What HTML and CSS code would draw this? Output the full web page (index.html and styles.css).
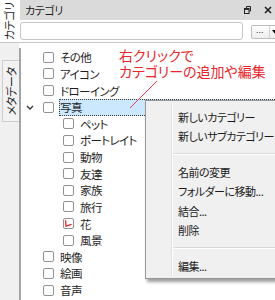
FILE: index.html
```html
<!DOCTYPE html>
<html lang="ja">
<head>
<meta charset="utf-8">
<title>カテゴリ</title>
<link rel="stylesheet" href="styles.css">
</head>
<body>
<div class="app">
  <div class="tabs">
    <div class="tab tab-active"><span class="tab-label">カテゴリ</span></div>
    <div class="tab tab-meta"><span class="tab-label">メタデータ</span></div>
  </div>
  <div class="panel">
    <div class="header">
      <span class="title">カテゴリ</span>
      <span class="hdr-icons">
        <svg width="7" height="8" viewBox="0 0 7 8"><path d="M2.5 2V0.5h4v4.5H5" fill="none" stroke="#222"/><rect x="0.5" y="2.5" width="4.5" height="5" fill="none" stroke="#222"/><path d="M0.5 3.2h4.5" stroke="#222" stroke-width="1.4"/></svg>
        <svg width="8" height="8" viewBox="0 0 8 8"><path d="M1 1L7 7M7 1L1 7" stroke="#222" stroke-width="1.6"/></svg>
      </span>
    </div>
    <div class="search-row">
      <div class="search"></div>
      <div class="opt-btn"><span class="dots">...</span><span class="caret-sep"></span><svg class="caret" width="5" height="4" viewBox="0 0 5 4"><path d="M0 0h5L2.5 3.5z" fill="#111"/></svg></div>
    </div>
    <div class="tree">
      <div class="row"><span class="toggle"></span><span class="cb"></span><span class="label">その他</span></div>
      <div class="row"><span class="toggle"></span><span class="cb"></span><span class="label">アイコン</span></div>
      <div class="row"><span class="toggle"></span><span class="cb"></span><span class="label">ドローイング</span></div>
      <div class="row sel"><span class="toggle"><svg width="8" height="5" viewBox="0 0 8 5"><path d="M1 1l3 3 3-3" fill="none" stroke="#333" stroke-width="1.4"/></svg></span><span class="cb"></span><span class="label">写真</span></div>
      <div class="row l1"><span class="toggle"></span><span class="cb"></span><span class="label">ペット</span></div>
      <div class="row l1"><span class="toggle"></span><span class="cb"></span><span class="label">ポートレイト</span></div>
      <div class="row l1"><span class="toggle"></span><span class="cb"></span><span class="label">動物</span></div>
      <div class="row l1"><span class="toggle"></span><span class="cb"></span><span class="label">友達</span></div>
      <div class="row l1"><span class="toggle"></span><span class="cb"></span><span class="label">家族</span></div>
      <div class="row l1"><span class="toggle"></span><span class="cb"></span><span class="label">旅行</span></div>
      <div class="row l1"><span class="toggle"></span><span class="cb"><svg width="11" height="11" viewBox="0 0 11 11"><path d="M2.6 2.2L2.9 8.2L8.6 6.3" fill="none" stroke="#e02a2a" stroke-width="1.3"/></svg></span><span class="label">花</span></div>
      <div class="row l1"><span class="toggle"></span><span class="cb"></span><span class="label">風景</span></div>
      <div class="row"><span class="toggle"></span><span class="cb"></span><span class="label">映像</span></div>
      <div class="row"><span class="toggle"></span><span class="cb"></span><span class="label">絵画</span></div>
      <div class="row"><span class="toggle"></span><span class="cb"></span><span class="label">音声</span></div>
    </div>
  </div>
</div>

<div class="note">右クリックで<br>カテゴリーの追加や編集</div>
<svg class="pointer" width="275" height="300" viewBox="0 0 275 300"><line x1="157" y1="81" x2="130" y2="108" stroke="#e8404a" stroke-width="1"/></svg>

<div class="menu">
  <div class="mi">新しいカテゴリー</div>
  <div class="mi">新しいサブカテゴリー</div>
  <div class="msep"></div>
  <div class="mi">名前の変更</div>
  <div class="mi">フォルダーに移動...</div>
  <div class="mi">結合...</div>
  <div class="mi">削除</div>
  <div class="msep"></div>
  <div class="mi">編集...</div>
</div>
</body>
</html>
```
FILE: styles.css
```css
html, body {
  margin: 0;
  padding: 0;
}
body {
  width: 275px;
  height: 300px;
  overflow: hidden;
  position: relative;
  background: #fff;
  color: #1e1e1e;
  font-family: "Noto Sans CJK JP", "Noto Sans", sans-serif;
  font-feature-settings: "palt";
}

.app {
  display: flex;
  height: 300px;
}

/* left vertical tab strip */
.tabs {
  width: 19px;
  flex-shrink: 0;
  background: #f0f0f0;
  display: flex;
  flex-direction: column;
}
.tab {
  display: flex;
  align-items: center;
  justify-content: center;
  box-sizing: border-box;
}
.tab-active {
  height: 43px;
  background: #fff;
  border-bottom: 1px solid #c8c8c8;
}
.tab-meta {
  margin: 17px 0 0 2px;
  height: 62px;
  border: 1px solid #cdcdcd;
  border-right: none;
  background: #f2f2f2;
}
.tab-label {
  writing-mode: vertical-rl;
  text-orientation: sideways;
  transform: rotate(180deg);
  font-size: 11px;
  line-height: 1;
  letter-spacing: -0.3px;
  color: #222;
}

/* panel */
.panel {
  flex: 1;
  min-width: 0;
  display: flex;
  flex-direction: column;
}
.header {
  height: 20px;
  margin-left: 1px;
  background: #dadada;
  display: flex;
  align-items: center;
  padding: 0 3px 0 5px;
  font-size: 11px;
  letter-spacing: -0.4px;
  color: #222;
}
.title {
  flex: 1;
}
.hdr-icons {
  display: flex;
  align-items: center;
  gap: 13px;
}

.search-row {
  height: 22px;
  display: flex;
  align-items: center;
  gap: 8px;
  padding-left: 1px;
  overflow: hidden;
  border-bottom: 1px solid #c6c6c6;
  margin-bottom: 5px;
}
.search {
  flex-shrink: 0;
  width: 223px;
  height: 18px;
  box-sizing: border-box;
  border: 1px solid #c5c5c5;
  border-radius: 3px;
  background: #fff;
}
.opt-btn {
  flex-shrink: 0;
  width: 30px;
  height: 14px;
  margin-top: 2px;
  box-sizing: border-box;
  border: 1px solid #bdbdbd;
  border-radius: 2px;
  background: linear-gradient(#ffffff, #eeeeee);
  display: flex;
  align-items: center;
  font-family: "Liberation Sans", sans-serif;
  font-size: 9px;
  color: #222;
}
.dots {
  margin-left: 4px;
  line-height: 1;
  margin-top: -3px;
}
.caret-sep {
  width: 1px;
  height: 12px;
  background: #d0d0d0;
  margin-left: 5px;
}
.caret {
  margin-left: 2px;
}

/* tree */
.tree {
  flex: 1;
  border-left: 2px solid #a4a4a4;
  padding-top: 1px;
}
.row {
  height: 16.64px;
  display: flex;
  align-items: center;
  font-size: 11.5px;
  letter-spacing: -0.6px;
  color: #1e1e1e;
}
.row.l1 {
  padding-left: 20px;
}
.toggle {
  width: 22px;
  flex-shrink: 0;
  box-sizing: border-box;
  padding-left: 5px;
  display: flex;
  align-items: center;
}
.cb {
  width: 11px;
  height: 11px;
  flex-shrink: 0;
  box-sizing: border-box;
  border: 1px solid #929292;
  border-radius: 2px;
  background: #fff;
  margin-right: 5px;
  display: flex;
}
.cb svg {
  margin: -1px;
}
.label {
  flex: 1;
  height: 100%;
  box-sizing: border-box;
  border: 1px solid transparent;
  display: flex;
  align-items: center;
  white-space: nowrap;
}
.row.sel .label {
  background: #cce8ff;
  border: 1px dotted #3a3a3a;
}

/* annotation */
.note {
  position: absolute;
  left: 119px;
  top: 48px;
  font-size: 14px;
  line-height: 15.5px;
  color: #e8262b;
  white-space: nowrap;
}
.pointer {
  position: absolute;
  left: 0;
  top: 0;
  pointer-events: none;
}

/* context menu */
.menu {
  position: absolute;
  left: 145px;
  top: 100px;
  width: 140px;
  box-sizing: border-box;
  padding: 6px 0 2px;
  background: #f0f0f0;
  border: 1px solid #979797;
  box-shadow: 2px 3px 3px rgba(0, 0, 0, 0.38);
  font-size: 11px;
  letter-spacing: -0.5px;
  color: #1a1a1a;
}
.menu::before {
  content: "";
  position: absolute;
  left: 25px;
  top: 2px;
  bottom: 2px;
  width: 1px;
  background: #e0e0e0;
  border-right: 1px solid #fff;
}
.mi {
  height: 19.5px;
  display: flex;
  align-items: center;
  padding-left: 32px;
  white-space: nowrap;
}
.msep {
  height: 16px;
  display: flex;
  align-items: center;
  padding-left: 27px;
}
.msep::after {
  content: "";
  flex: 1;
  height: 1px;
  background: #d8d8d8;
  border-bottom: 1px solid #fff;
}
```
